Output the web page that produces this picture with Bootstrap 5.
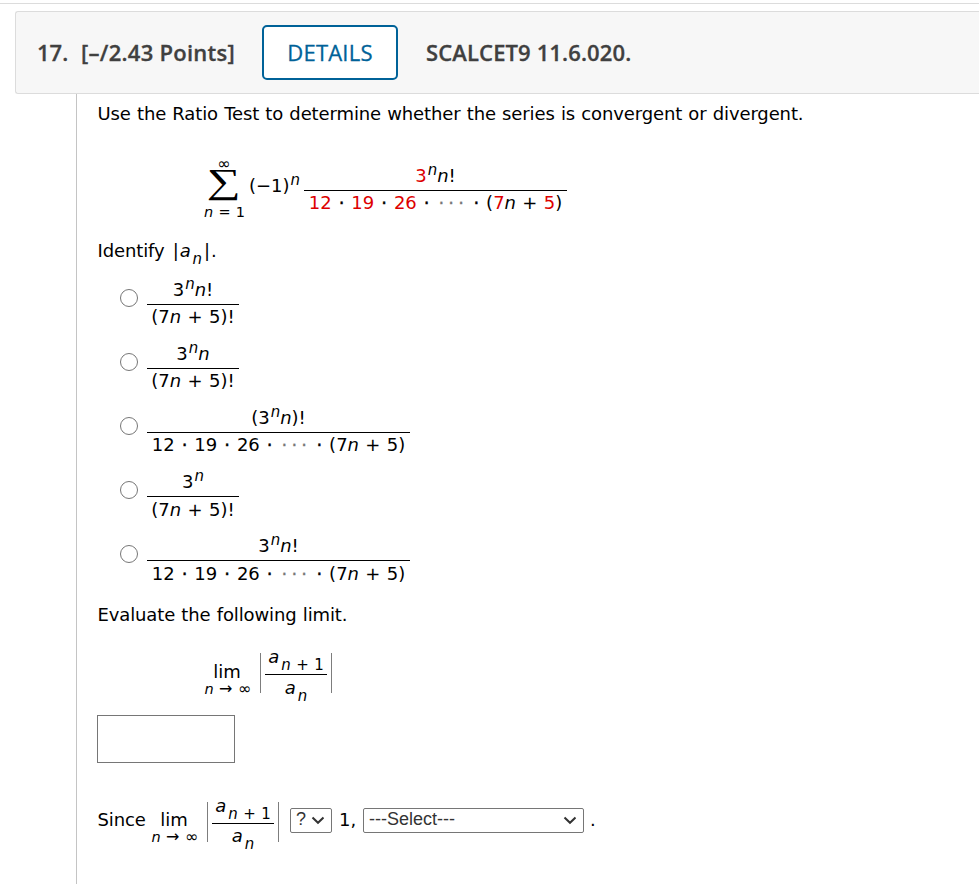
<!DOCTYPE html>
<html lang="en">
<head>
<meta charset="utf-8">
<meta name="viewport" content="width=device-width, initial-scale=1">
<title>Ratio Test question</title>
<link href="https://cdn.jsdelivr.net/npm/bootstrap@5.3.0/dist/css/bootstrap.min.css" rel="stylesheet">
<style>
body{font:18px/24px "DejaVu Sans",Verdana,sans-serif;color:#000;background:#fff}
.page{height:884px;padding-top:3px}
.topline{height:1px;background:#dcdcdc;margin-bottom:7px}
.qhead{margin-left:15px;height:83px;flex:none;border:1px solid #dcdcdc;border-right:0;border-radius:3px 0 0 3px;background:#f7f7f7;font-family:"Open Sans","Noto Sans",sans-serif;font-size:22px;font-weight:600;color:#404040;padding-left:21px;line-height:30px}
.qhead>span{padding-bottom:2px;-webkit-text-stroke:.3px #404040}
.qnum{width:44px}
.qpts{width:181px;letter-spacing:.27px}
.qcode{letter-spacing:.13px}
.btn-details{width:136px;height:55px;border:2px solid #006298;border-radius:5px;color:#006298;background:#fff;font-size:22px;font-weight:400;padding:0;margin-right:28px;letter-spacing:.2px;-webkit-text-stroke:.3px #006298}
.qbody{margin-left:76px;border-left:1px solid #c4c4c4;padding:8px 0 0 20px;word-spacing:.6px}
.ln{height:24px;padding-left:.5px;letter-spacing:-.12px}
i{font-style:italic}
.up,.dn{font-size:15px;line-height:0}
.up{vertical-align:7px;padding-left:1px}
.dn{vertical-align:-7px;padding-left:2px}
.bar{padding:0 1px 0 2px}
.red{color:#d00}
.dot{display:inline-block;width:7px;text-align:center;-webkit-text-stroke:.4px}
.dots{display:inline-block;width:30px;color:#777;-webkit-text-stroke:.3px;letter-spacing:4.2px;padding-left:2px}
.frac{white-space:nowrap;text-align:center}
.frac>div{height:24px}
.frac>.num{height:26px;border-bottom:1px solid #000;box-sizing:content-box}
.w-long{width:263px}.w-short{width:92px}.w-lim{width:62px}
.series{margin-top:24px;height:80px;padding-left:107px}
.series .frac{margin-top:14px}
.sumcol{width:40px;font-size:14.5px;line-height:16px;white-space:nowrap}
.inf{font-size:16px}
.sumtop{padding-top:6px;height:18px}
.sigma{font:35px/28px "Liberation Serif",serif;height:36px;transform:scaleX(1.36)}
.base{margin:24px 4px 0 5px;width:51px;white-space:nowrap}
.opts{margin-top:15px;padding-left:23px;gap:13px}
.opts input{width:18px;height:18px;margin:11px 9px 0 0}
.low{padding-top:1px}
.limrow{height:60px}
.limcol{width:48px;white-space:nowrap;font-size:14.5px;line-height:17px}
.limcol .word{font-size:18px;line-height:16px;padding-right:2px}
.abs{height:40px;border:solid #7d7d7d;border-width:0 1.5px;padding:0 4px}
.abs .num{height:21px!important;line-height:8px}
.abs .den{padding-top:1px}
.answer{width:138px;height:48px;border:1px solid #767676;border-radius:0;margin-top:10px}
.pick{height:25px;border:1px solid #767676;border-radius:2px;color:#333;font:18px/21px "Liberation Sans",Arial,sans-serif;word-spacing:0;padding:0 0 2px 5px;background:#fff url("data:image/svg+xml,%3Csvg xmlns='http://www.w3.org/2000/svg' viewBox='0 0 14 9'%3E%3Cpath d='M1.5 1.500 7 6.800l5.500-5.300' fill='none' stroke='%23333' stroke-width='2'/%3E%3C/svg%3E") no-repeat right 6px center/14px 9px}
.sel-a{width:42px}.sel-b{width:221px}
</style>
</head>
<body>
<main class="page d-flex flex-column">
  <div class="topline"></div>
  <header class="qhead d-flex align-items-center">
    <span class="qnum">17.</span><span class="qpts">[–/2.43 Points]</span>
    <button class="btn btn-details" type="button">DETAILS</button>
    <span class="qcode">SCALCET9 11.6.020.</span>
  </header>
  <section class="qbody flex-fill">
    <div class="ln">Use the Ratio Test to determine whether the series is convergent or divergent.</div>
    <div class="series d-flex align-items-start">
      <div class="sumcol text-center"><div class="sumtop inf">∞</div><div class="sigma">∑</div><div><i>n</i> = 1</div></div>
      <div class="base">(−1)<i class="up">n</i></div>
      <div class="frac w-long">
        <div class="num"><span class="red">3</span><i class="up">n</i><i>n</i>!</div>
        <div><span class="red">12</span> <span class="dot">·</span> <span class="red">19</span> <span class="dot">·</span> <span class="red">26</span> <span class="dot">·</span> <span class="dots">···</span> <span class="dot">·</span> (<span class="red">7</span><i>n</i> + <span class="red">5</span>)</div>
      </div>
    </div>
    <div class="ln" style="margin-top:9px">Identify <span class="bar">|</span><i>a</i><i class="dn">n</i><span class="bar">|</span>.</div>
    <div class="opts d-flex flex-column">
      <label class="d-flex align-items-start"><input type="radio" name="an"><span class="frac w-short d-block"><div class="num">3<i class="up">n</i><i>n</i>!</div><div>(7<i>n</i> + 5)!</div></span></label>
      <label class="d-flex align-items-start"><input type="radio" name="an"><span class="frac w-short d-block"><div class="num">3<i class="up">n</i><i>n</i></div><div>(7<i>n</i> + 5)!</div></span></label>
      <label class="d-flex align-items-start"><input type="radio" name="an"><span class="frac w-long d-block"><div class="num">(3<i class="up">n</i><i>n</i>)!</div><div>12 <span class="dot">·</span> 19 <span class="dot">·</span> 26 <span class="dot">·</span> <span class="dots">···</span> <span class="dot">·</span> (7<i>n</i> + 5)</div></span></label>
      <label class="d-flex align-items-start"><input type="radio" name="an"><span class="frac w-short d-block"><div class="num">3<i class="up">n</i></div><div class="low">(7<i>n</i> + 5)!</div></span></label>
      <label class="d-flex align-items-start"><input type="radio" name="an"><span class="frac w-long d-block"><div class="num">3<i class="up">n</i><i>n</i>!</div><div class="low">12 <span class="dot">·</span> 19 <span class="dot">·</span> 26 <span class="dot">·</span> <span class="dots">···</span> <span class="dot">·</span> (7<i>n</i> + 5)</div></span></label>
    </div>
    <div class="ln" style="margin-top:18px">Evaluate the following limit.</div>
    <div class="limrow d-flex align-items-start" style="margin-top:18px;padding-left:107px">
      <div class="limcol text-center" style="margin:19px 8px 0 0"><div class="word">lim</div><div><i>n</i> <span class="inf">→ ∞</span></div></div>
      <div class="abs mt-2"><div class="frac w-lim"><div class="num"><i>a</i><span class="dn"><i>n</i> + 1</span></div><div class="den"><i>a</i><i class="dn">n</i></div></div></div>
    </div>
    <input class="answer d-block" type="text" aria-label="Limit">
    <div class="limrow d-flex align-items-start" style="margin-top:31px">
      <div class="ln" style="margin-top:14px;width:54px">Since</div>
      <div class="limcol text-center" style="margin:18px 8px 0 0"><div class="word">lim</div><div><i>n</i> <span class="inf">→ ∞</span></div></div>
      <div class="abs mt-2"><div class="frac w-lim"><div class="num"><i>a</i><span class="dn"><i>n</i> + 1</span></div><div class="den pt-0"><i>a</i><i class="dn">n</i></div></div></div>
      <select class="form-select pick sel-a" style="margin:14px 7px 0 11px"><option>?</option></select>
      <div style="margin-top:14px;width:24px">1,</div>
      <select class="form-select pick sel-b" style="margin:14px 6px 0 0"><option>---Select---</option></select>
      <div style="margin-top:14px">.</div>
    </div>
  </section>
</main>
<script src="https://cdn.jsdelivr.net/npm/bootstrap@5.3.0/dist/js/bootstrap.bundle.min.js"></script>
</body>
</html>
